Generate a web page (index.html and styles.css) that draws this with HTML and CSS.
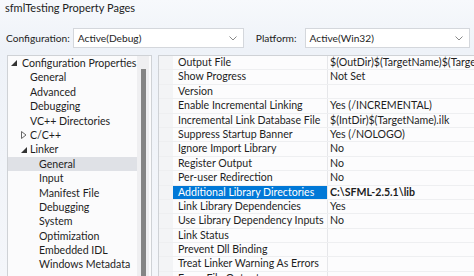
FILE: index.html
```html
<!DOCTYPE html>
<html lang="en">
<head>
    <meta charset="UTF-8">
    <title>sfmlTesting Property Pages</title>
    <link rel="stylesheet" href="styles.css">
</head>
<body>
<div class="window">
    <div class="title">sfmlTesting Property Pages</div>

    <div class="config-bar">
        <span class="config-label">Configuration:</span>
        <div class="combo combo-config">
            <span>Active(Debug)</span>
            <svg class="chevron" width="8" height="5" viewBox="0 0 8 5"><path d="M0.5 0.5 L4 4 L7.5 0.5" fill="none" stroke="#888" stroke-width="1"/></svg>
        </div>
        <span class="config-label platform-label">Platform:</span>
        <div class="combo combo-platform">
            <span>Active(Win32)</span>
            <svg class="chevron" width="8" height="5" viewBox="0 0 8 5"><path d="M0.5 0.5 L4 4 L7.5 0.5" fill="none" stroke="#888" stroke-width="1"/></svg>
        </div>
    </div>

    <div class="panes">
        <div class="tree">
            <div class="tree-items">
                <div class="node lvl0"><svg class="exp" width="6" height="6" viewBox="0 0 6 6"><path d="M6 0 L6 6 L0 6 Z" fill="#333"/></svg>Configuration Properties</div>
                <div class="node lvl1">General</div>
                <div class="node lvl1">Advanced</div>
                <div class="node lvl1">Debugging</div>
                <div class="node lvl1">VC++ Directories</div>
                <div class="node lvl1 has-exp"><svg class="exp" width="6" height="8" viewBox="0 0 6 8"><path d="M0.5 0.5 L5 4 L0.5 7.5 Z" fill="none" stroke="#666" stroke-width="1"/></svg>C/C++</div>
                <div class="node lvl1 has-exp"><svg class="exp" width="6" height="6" viewBox="0 0 6 6"><path d="M6 0 L6 6 L0 6 Z" fill="#333"/></svg>Linker</div>
                <div class="node lvl2 selected">General</div>
                <div class="node lvl2">Input</div>
                <div class="node lvl2">Manifest File</div>
                <div class="node lvl2">Debugging</div>
                <div class="node lvl2">System</div>
                <div class="node lvl2">Optimization</div>
                <div class="node lvl2">Embedded IDL</div>
                <div class="node lvl2">Windows Metadata</div>
            </div>
            <div class="scroll-track"><div class="scroll-thumb"></div></div>
        </div>

        <div class="grid">
            <div class="prop"><span class="name">Output File</span><span class="value">$(OutDir)$(TargetName)$(TargetExt)</span></div>
            <div class="prop"><span class="name">Show Progress</span><span class="value">Not Set</span></div>
            <div class="prop"><span class="name">Version</span><span class="value"></span></div>
            <div class="prop"><span class="name">Enable Incremental Linking</span><span class="value">Yes (/INCREMENTAL)</span></div>
            <div class="prop"><span class="name">Incremental Link Database File</span><span class="value">$(IntDir)$(TargetName).ilk</span></div>
            <div class="prop"><span class="name">Suppress Startup Banner</span><span class="value">Yes (/NOLOGO)</span></div>
            <div class="prop"><span class="name">Ignore Import Library</span><span class="value">No</span></div>
            <div class="prop"><span class="name">Register Output</span><span class="value">No</span></div>
            <div class="prop"><span class="name">Per-user Redirection</span><span class="value">No</span></div>
            <div class="prop selected"><span class="name">Additional Library Directories</span><span class="value bold">C:\SFML-2.5.1\lib</span></div>
            <div class="prop"><span class="name">Link Library Dependencies</span><span class="value">Yes</span></div>
            <div class="prop"><span class="name">Use Library Dependency Inputs</span><span class="value">No</span></div>
            <div class="prop"><span class="name">Link Status</span><span class="value"></span></div>
            <div class="prop"><span class="name">Prevent Dll Binding</span><span class="value"></span></div>
            <div class="prop"><span class="name">Treat Linker Warning As Errors</span><span class="value"></span></div>
            <div class="prop"><span class="name">Force File Output</span><span class="value"></span></div>
        </div>
    </div>
</div>
</body>
</html>
```

FILE: styles.css
```css
body {
    margin: 0;
    padding: 0;
    font-family: Lato, 'Liberation Sans', sans-serif;
    font-size: 10.6px;
    color: #1e1e1e;
    background: #fff;
}

.window {
    width: 474px;
    height: 276px;
    overflow: hidden;
    background: linear-gradient(#f7f9fc, #eef2f8 50px, #f4f6fa);
}

.title {
    height: 16px;
    line-height: 16px;
    padding-left: 5px;
    font-size: 11px;
    color: #222;
}

.config-bar {
    display: flex;
    align-items: center;
    margin-top: 12px;
    height: 20px;
    font-size: 10.2px;
}

.config-label {
    flex: none;
    padding-left: 6px;
    margin-right: 3px;
    white-space: nowrap;
}

.platform-label {
    padding-left: 12px;
    margin-right: 8px;
}

.combo {
    display: flex;
    align-items: center;
    justify-content: space-between;
    height: 20px;
    box-sizing: border-box;
    border: 1px solid #d4d7dc;
    background: #fff;
    padding: 0 6px 0 4px;
}

.combo-config {
    width: 171px;
}

.combo-platform {
    flex: 1;
    margin-right: 4px;
}

.panes {
    display: flex;
    margin-top: 7px;
    height: 230px;
}

.tree {
    display: flex;
    flex: none;
    width: 143px;
    margin-left: 7px;
    border: 1px solid #cfd2d6;
    border-bottom: none;
    background: #fbfbfc;
}

.tree-items {
    flex: 1;
    min-width: 0;
}

.node {
    height: 14.4px;
    line-height: 14.4px;
    white-space: nowrap;
    display: flex;
    align-items: center;
}

.exp {
    margin-right: 5px;
    flex: none;
}

.lvl0 {
    padding-left: 3px;
}

.lvl1 {
    padding-left: 22px;
}

.lvl1.has-exp {
    padding-left: 13px;
}

.lvl1.has-exp .exp {
    margin-right: 3px;
}

.lvl2 {
    padding-left: 31px;
}

.node.selected {
    background: #dfe1e6;
}

.scroll-track {
    flex: none;
    width: 12px;
    margin-right: 2px;
    background: #efeff1;
    padding-top: 13px;
}

.scroll-thumb {
    width: 5px;
    height: 240px;
    margin-left: 4px;
    background: #858585;
}

.grid {
    flex: 1;
    min-width: 0;
    margin-left: 6px;
    border-top: 1px solid #cfd2d6;
    border-left: 1px solid #cfd2d6;
    background: #fcfcfd;
}

.prop {
    display: flex;
    height: 14.4px;
    box-sizing: border-box;
    border-bottom: 1px solid #eeeff1;
    padding-left: 14px;
    background: #f3f4f6;
    white-space: nowrap;
}

.name {
    flex: none;
    width: 155px;
    box-sizing: border-box;
    padding-left: 5px;
    line-height: 13.4px;
    background: #fcfcfd;
    border-right: 1px solid #e6e7ea;
    overflow: hidden;
}

.value {
    flex: 1;
    min-width: 0;
    padding-left: 2px;
    line-height: 13.4px;
    background: #fcfcfd;
    overflow: hidden;
}

.bold {
    font-weight: bold;
}

.prop.selected .name {
    background: #0078d7;
    color: #fff;
}
```
